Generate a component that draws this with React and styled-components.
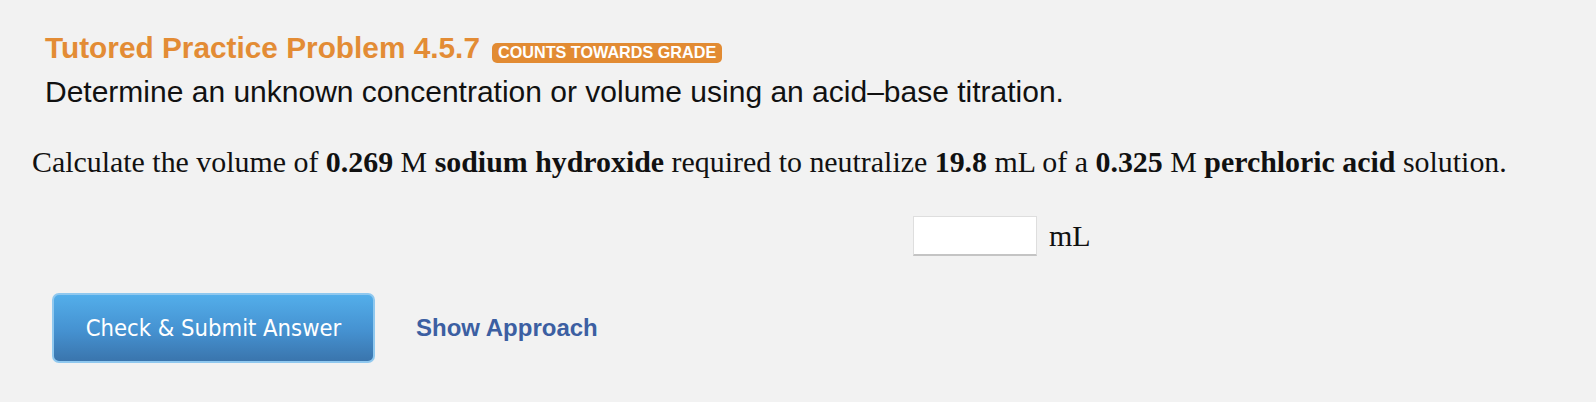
import React from 'react';
import styled, { createGlobalStyle } from 'styled-components';

const GlobalStyle = createGlobalStyle`
  body {
    margin: 0;
    background-color: #f2f2f2;
  }
`;

const Page = styled.div`
  padding: 30px 0 40px 32px;
  min-height: 402px;
  box-sizing: border-box;
  background-color: #f2f2f2;
`;

const Header = styled.div`
  padding-left: 13px;
  font-family: "Liberation Sans", Arial, Helvetica, sans-serif;
`;

const TitleRow = styled.div`
  display: flex;
  align-items: baseline;
  gap: 12px;
`;

const Title = styled.h1`
  margin: 0;
  font-size: 29.8px;
  line-height: 36px;
  font-weight: bold;
  color: #e38c35;
`;

const Badge = styled.span`
  display: inline-block;
  padding: 0 6px 2px;
  border-radius: 5px;
  background-color: #e28b33;
  color: #ffffff;
  font-size: 16.2px;
  line-height: 18px;
  font-weight: bold;
  text-transform: uppercase;
`;

const Subtitle = styled.p`
  margin: 8px 0 0;
  font-size: 30px;
  line-height: 36px;
  color: #111111;
`;

const Question = styled.p`
  margin: 34px 0 0;
  font-family: "Liberation Serif", "Times New Roman", serif;
  font-size: 29.9px;
  line-height: 36px;
  color: #111111;

  b {
    font-weight: bold;
  }
`;

const AnswerRow = styled.div`
  display: flex;
  align-items: center;
  gap: 12px;
  margin-top: 36px;
  padding-left: 881px;
`;

const AnswerInput = styled.input`
  box-sizing: border-box;
  width: 124px;
  height: 40px;
  margin: 0;
  padding: 0 6px;
  background-color: #ffffff;
  border: 1px solid #dedede;
  border-bottom: 2px solid #c4c4c4;
  border-radius: 0;
  outline: none;
  font-family: "Liberation Serif", "Times New Roman", serif;
  font-size: 24px;
`;

const Unit = styled.span`
  font-family: "Liberation Serif", "Times New Roman", serif;
  font-size: 30px;
  line-height: 36px;
  color: #111111;
`;

const ActionRow = styled.div`
  display: flex;
  align-items: center;
  gap: 41px;
  margin: 37px 0 0 20px;
`;

const SubmitButton = styled.button`
  box-sizing: border-box;
  width: 323px;
  height: 70px;
  padding: 0;
  border: 2px solid #8fc8ef;
  border-radius: 7px;
  background: linear-gradient(to bottom, #53aeea 0%, #4591d0 55%, #3a75ad 100%);
  color: #ffffff;
  font-family: "DejaVu Sans Condensed", "DejaVu Sans", Tahoma, Verdana, sans-serif;
  font-stretch: condensed;
  font-size: 23.6px;
  cursor: pointer;
`;

const ApproachLink = styled.a`
  font-family: "Liberation Sans", Arial, Helvetica, sans-serif;
  font-size: 24px;
  font-weight: bold;
  color: #3c5fa2;
  text-decoration: none;
  cursor: pointer;
`;

const App = () => {
  return (
    <>
      <GlobalStyle />
      <Page>
        <Header>
          <TitleRow>
            <Title>Tutored Practice Problem 4.5.7</Title>
            <Badge>Counts towards grade</Badge>
          </TitleRow>
          <Subtitle>Determine an unknown concentration or volume using an acid–base titration.</Subtitle>
        </Header>

        <Question>
          Calculate the volume of <b>0.269</b> M <b>sodium hydroxide</b> required to neutralize{' '}
          <b>19.8</b> mL of a <b>0.325</b> M <b>perchloric acid</b> solution.
        </Question>

        <AnswerRow>
          <AnswerInput type="text" aria-label="answer" />
          <Unit>mL</Unit>
        </AnswerRow>

        <ActionRow>
          <SubmitButton>Check &amp; Submit Answer</SubmitButton>
          <ApproachLink>Show Approach</ApproachLink>
        </ActionRow>
      </Page>
    </>
  );
};

export default App;
